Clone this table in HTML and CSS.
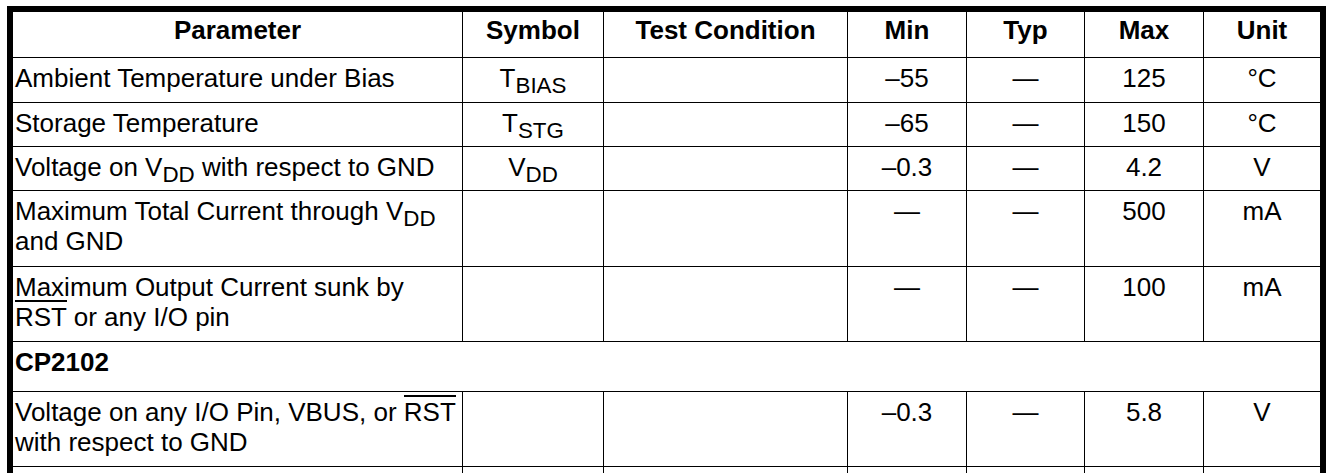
FILE: index.html
```html
<!DOCTYPE html>
<html lang="en">
<head>
<meta charset="utf-8">
<title>Absolute Maximum Ratings</title>
<link rel="stylesheet" href="styles.css">
</head>
<body>
<div class="table">
  <div class="cell head">Parameter</div>
  <div class="cell head">Symbol</div>
  <div class="cell head">Test Condition</div>
  <div class="cell head">Min</div>
  <div class="cell head">Typ</div>
  <div class="cell head">Max</div>
  <div class="cell head">Unit</div>

  <div class="cell param">Ambient Temperature under Bias</div>
  <div class="cell c">T<sub>BIAS</sub></div>
  <div class="cell"></div>
  <div class="cell c">–55</div>
  <div class="cell c">—</div>
  <div class="cell c">125</div>
  <div class="cell c">°C</div>

  <div class="cell param">Storage Temperature</div>
  <div class="cell c">T<sub>STG</sub></div>
  <div class="cell"></div>
  <div class="cell c">–65</div>
  <div class="cell c">—</div>
  <div class="cell c">150</div>
  <div class="cell c">°C</div>

  <div class="cell param">Voltage on V<sub>DD</sub> with respect to GND</div>
  <div class="cell c">V<sub>DD</sub></div>
  <div class="cell"></div>
  <div class="cell c">–0.3</div>
  <div class="cell c">—</div>
  <div class="cell c">4.2</div>
  <div class="cell c">V</div>

  <div class="cell param">Maximum Total Current through V<sub>DD</sub><br>and GND</div>
  <div class="cell c"></div>
  <div class="cell"></div>
  <div class="cell c">—</div>
  <div class="cell c">—</div>
  <div class="cell c">500</div>
  <div class="cell c">mA</div>

  <div class="cell param">Maximum Output Current sunk by<br><span class="bar">RST</span> or any I/O pin</div>
  <div class="cell c"></div>
  <div class="cell"></div>
  <div class="cell c">—</div>
  <div class="cell c">—</div>
  <div class="cell c">100</div>
  <div class="cell c">mA</div>

  <div class="cell section">CP2102</div>

  <div class="cell param">Voltage on any I/O Pin, VBUS, or <span class="bar">RST</span><br>with respect to GND</div>
  <div class="cell c"></div>
  <div class="cell"></div>
  <div class="cell c">–0.3</div>
  <div class="cell c">—</div>
  <div class="cell c">5.8</div>
  <div class="cell c">V</div>

  <div class="cell param"></div>
  <div class="cell c"></div>
  <div class="cell"></div>
  <div class="cell c"></div>
  <div class="cell c"></div>
  <div class="cell c"></div>
  <div class="cell c"></div>
</div>
</body>
</html>
```

FILE: styles.css
```css
html, body {
  margin: 0;
  padding: 0;
  background: #fff;
}

body {
  font-family: "Liberation Sans", Arial, sans-serif;
  color: #000;
}

.table {
  margin: 6px 0 0 7px;
  width: 1307px;
  display: grid;
  grid-template-columns: 449px 140px 243px 118px 117px 118px 116px;
  grid-template-rows: 45px 44px 43px 43px 75px 74px 49px 74px 44px;
  gap: 1px;
  background: #000;
  border: 6px solid #000;
}

.cell {
  background: #fff;
  font-size: 26px;
  line-height: 30px;
  padding: 5px 2px 0 2px;
  white-space: nowrap;
}

.head {
  font-weight: bold;
  text-align: center;
  padding-top: 3px;
}

.c {
  text-align: center;
}

.param {
  text-align: left;
}

.section {
  grid-column: 1 / -1;
  font-weight: bold;
}

sub {
  font-size: 0.86em;
  vertical-align: -6px;
  line-height: 0;
}

.bar {
  border-top: 2px solid #000;
}
```
